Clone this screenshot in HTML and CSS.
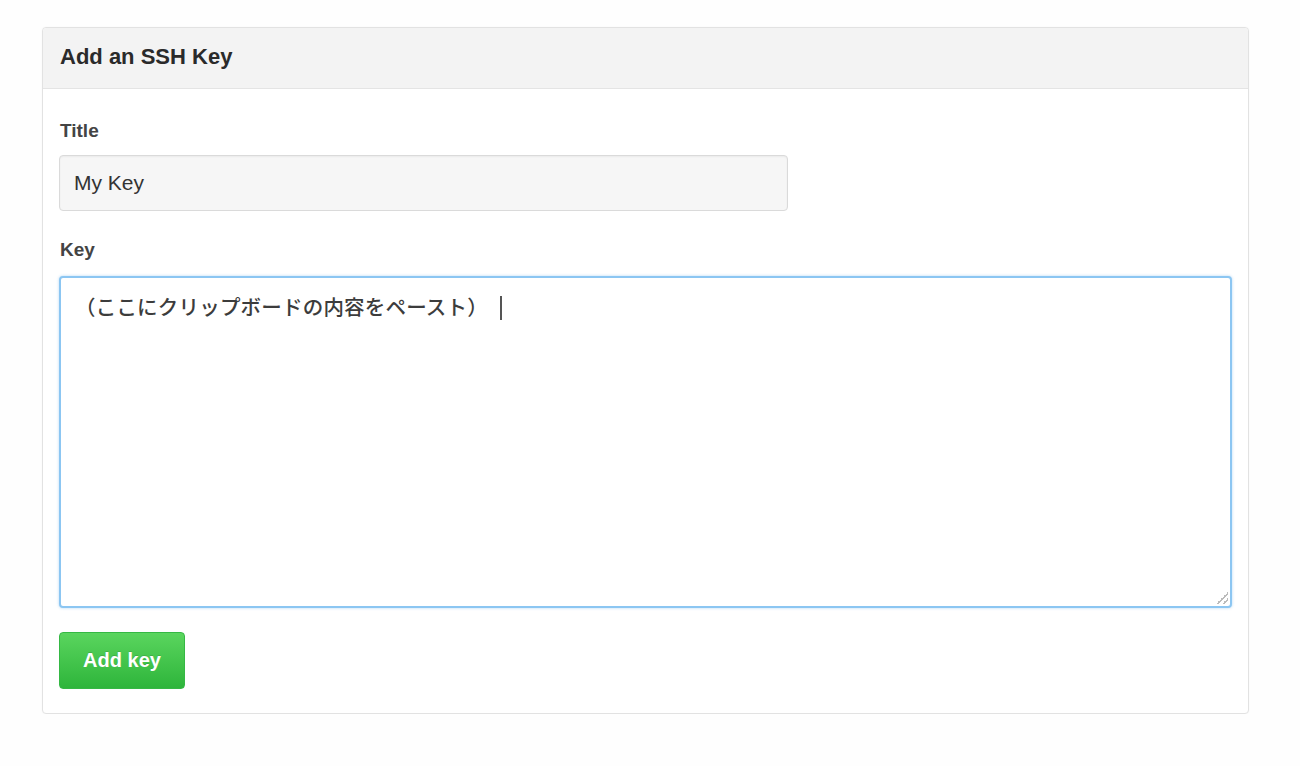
FILE: index.html
```html
<!DOCTYPE html>
<html lang="ja">
<head>
<meta charset="utf-8">
<link rel="stylesheet" href="styles.css">
</head>
<body>
<div class="page">
  <div class="box">
    <div class="box-header">Add an SSH Key</div>
    <div class="box-body">
      <div class="label">Title</div>
      <div class="input">My Key</div>
      <div class="label key-label">Key</div>
      <div class="textarea"><span class="jp">（ここにクリップボードの内容をペースト）</span><span class="caret"></span><span class="grip"></span></div>
      <div class="button">Add key</div>
    </div>
  </div>
</div>
</body>
</html>
```
FILE: styles.css
```css
html, body {
  margin: 0;
  padding: 0;
  background: #fefefe;
  font-family: "Liberation Sans", Arial, "Noto Sans CJK JP", sans-serif;
  color: #333;
}
.page {
  padding: 27px 51px 0 42px;
}
.box {
  border: 1px solid #e2e2e2;
  border-radius: 4px;
  background: #fff;
  box-shadow: 0 0 2px rgba(0,0,0,0.04);
}
.box-header {
  height: 61px;
  box-sizing: border-box;
  background: #f3f3f3;
  border-bottom: 1px solid #e4e4e4;
  border-radius: 4px 4px 0 0;
  padding-left: 17px;
  padding-bottom: 2px;
  display: flex;
  align-items: center;
  font-size: 22px;
  font-weight: bold;
  color: #2a2a2a;
}
.box-body {
  padding: 31px 16px 24px 16px;
}
.label {
  font-size: 19px;
  font-weight: bold;
  color: #444;
  line-height: 22px;
  padding-left: 1px;
}
.input {
  margin-top: 13px;
  width: 729px;
  height: 56px;
  box-sizing: border-box;
  border: 1px solid #dadada;
  border-radius: 4px;
  background: #f6f6f6;
  box-shadow: inset 0 1px 2px rgba(0,0,0,0.05);
  display: flex;
  align-items: center;
  padding-left: 14px;
  font-size: 21px;
  color: #333;
}
.key-label {
  margin-top: 28px;
}
.textarea {
  position: relative;
  margin-top: 15px;
  height: 332px;
  box-sizing: border-box;
  border: 2px solid #8cc6f2;
  border-radius: 4px;
  box-shadow: 0 0 3px rgba(81,167,232,0.45);
  background: #fff;
  padding: 14px 0 0 14px;
  font-size: 20px;
  color: #444;
  display: block;
}
.jp {
  font-family: "Noto Sans CJK JP", sans-serif;
  font-size: 20.5px;
  line-height: 28px;
  letter-spacing: 0.2px;
  color: #3c3c3c;
  font-weight: 500;
}
.caret {
  display: inline-block;
  width: 2px;
  height: 24px;
  background: #555;
  vertical-align: -5px;
  margin-left: 12px;
}
.grip {
  position: absolute;
  right: 2px;
  bottom: 2px;
  width: 12px;
  height: 12px;
  background: linear-gradient(135deg, transparent 50%, #bbb 50%, #bbb 60%, transparent 60%, transparent 75%, #bbb 75%, #bbb 85%, transparent 85%);
}
.button {
  margin-top: 24px;
  width: 126px;
  height: 57px;
  box-sizing: border-box;
  border: 1px solid #35b844;
  border-radius: 4px;
  background: linear-gradient(#5ad55e, #2eb53b);
  color: #fff;
  font-size: 20px;
  font-weight: bold;
  display: flex;
  align-items: center;
  justify-content: center;
  text-shadow: 0 -1px 0 rgba(0,0,0,0.15);
}
```
